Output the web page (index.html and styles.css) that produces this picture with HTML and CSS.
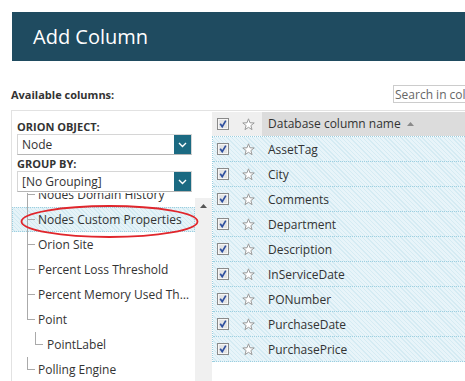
FILE: index.html
```html
<html lang="en">
<head>
<meta charset="UTF-8">
<title>Add Column</title>
<link rel="stylesheet" href="styles.css">
</head>
<body>

<svg class="defs" width="0" height="0">
  <symbol id="check" viewBox="0 0 12 12">
    <rect x="0.5" y="0.5" width="11" height="11" fill="#e4e4e4" stroke="#8a8a8a"/>
    <rect x="1.5" y="1.5" width="9" height="9" fill="none" stroke="#f7f7f7"/>
    <path d="M3.2 5.8 L5.2 8.6 L8.8 2.6" fill="none" stroke="#2f4f9e" stroke-width="1.7"/>
  </symbol>
  <symbol id="star" viewBox="0 0 13 13">
    <polygon points="6.5,0.8 7.97,4.78 12.21,4.95 8.88,7.57 10.03,11.65 6.5,9.3 2.97,11.65 4.12,7.57 0.79,4.95 5.03,4.78" fill="#fff" stroke="#9a9a9a" stroke-width="1"/>
  </symbol>
  <symbol id="caret" viewBox="0 0 9 6">
    <path d="M1 1 L4.5 4.5 L8 1" fill="none" stroke="#fff" stroke-width="1.4"/>
  </symbol>
</svg>

<header class="dialog-title">Add Column</header>

<div class="toolbar">
  <span class="label">Available columns:</span>
  <input type="text" class="search" placeholder="Search in columns">
</div>

<div class="panes">
  <!-- left side: object picker and tree -->
  <div class="side">
    <div class="filters">
      <label>ORION OBJECT:</label>
      <div class="select"><span>Node</span><b class="caret"><svg width="9" height="6"><use href="#caret"/></svg></b></div>
      <label class="second">GROUP BY:</label>
      <div class="select"><span>[No Grouping]</span><b class="caret"><svg width="9" height="6"><use href="#caret"/></svg></b></div>
    </div>
    <div class="tree-wrap">
      <ul class="tree">
        <li class="node">Nodes Domain History</li>
        <li class="node selected">Nodes Custom Properties</li>
        <li class="node">Orion Site</li>
        <li class="node">Percent Loss Threshold</li>
        <li class="node">Percent Memory Used Threshold</li>
        <li class="node last">Point</li>
        <li class="node sub">PointLabel</li>
        <li class="node last">Polling Engine</li>
      </ul>
      <div class="scrollbar">
        <svg width="7" height="4"><path d="M0 4 L3.5 0 L7 4 Z" fill="#555"/></svg>
      </div>
    </div>
    <svg class="callout" width="180" height="34"><ellipse cx="89.5" cy="16.5" rx="88" ry="15.5" fill="none" stroke="#e0262c" stroke-width="1.8"/></svg>
  </div>

  <!-- right side: column list -->
  <div class="grid">
    <div class="grid-head">
      <div class="pick"><svg class="cb" width="12" height="12"><use href="#check"/></svg><svg class="star" width="13" height="13"><use href="#star"/></svg></div>
      <div class="name">Database column name <svg class="sort" width="7" height="4"><path d="M0 4 L3.5 0 L7 4 Z" fill="#8a8a8a"/></svg></div>
    </div>
    <div class="rows">
      <div class="row"><svg class="cb" width="12" height="12"><use href="#check"/></svg><svg class="star" width="13" height="13"><use href="#star"/></svg><span>AssetTag</span></div>
      <div class="row"><svg class="cb" width="12" height="12"><use href="#check"/></svg><svg class="star" width="13" height="13"><use href="#star"/></svg><span>City</span></div>
      <div class="row"><svg class="cb" width="12" height="12"><use href="#check"/></svg><svg class="star" width="13" height="13"><use href="#star"/></svg><span>Comments</span></div>
      <div class="row"><svg class="cb" width="12" height="12"><use href="#check"/></svg><svg class="star" width="13" height="13"><use href="#star"/></svg><span>Department</span></div>
      <div class="row"><svg class="cb" width="12" height="12"><use href="#check"/></svg><svg class="star" width="13" height="13"><use href="#star"/></svg><span>Description</span></div>
      <div class="row"><svg class="cb" width="12" height="12"><use href="#check"/></svg><svg class="star" width="13" height="13"><use href="#star"/></svg><span>InServiceDate</span></div>
      <div class="row"><svg class="cb" width="12" height="12"><use href="#check"/></svg><svg class="star" width="13" height="13"><use href="#star"/></svg><span>PONumber</span></div>
      <div class="row"><svg class="cb" width="12" height="12"><use href="#check"/></svg><svg class="star" width="13" height="13"><use href="#star"/></svg><span>PurchaseDate</span></div>
      <div class="row"><svg class="cb" width="12" height="12"><use href="#check"/></svg><svg class="star" width="13" height="13"><use href="#star"/></svg><span>PurchasePrice</span></div>
    </div>
  </div>
</div>

</body>
</html>
```

FILE: styles.css
```css
html, body {
  margin: 0;
  padding: 0;
  overflow: hidden;
}
body {
  width: 465px;
  height: 381px;
  font-family: 'Open Sans', Arial, sans-serif;
  color: #333;
  background-color: #fff;
}
.defs {
  position: absolute;
}
.dialog-title {
  margin: 12px 0 0 12px;
  height: 49px;
  padding-left: 21px;
  background-color: #1f4b60;
  color: #fff;
  font-size: 20px;
  line-height: 49px;
}
.toolbar {
  display: flex;
  align-items: flex-end;
  height: 42px;
  padding: 0 0 7px 11px;
}
.label {
  flex: 0 0 382px;
  font-size: 11px;
  font-weight: bold;
  line-height: 16px;
}
.search {
  flex: none;
  width: 120px;
  height: 18px;
  box-sizing: border-box;
  border: 1px solid #ccc;
  padding: 0 1px;
  font: 12px 'Open Sans', Arial, sans-serif;
  outline: none;
}
.search::placeholder {
  color: #666;
}
.panes {
  display: flex;
  height: 270px;
  margin-left: 11px;
  border-top: 1px solid #e2e2e2;
}
.side {
  position: relative;
  flex: none;
  width: 200px;
  min-width: 0;
  display: flex;
  flex-direction: column;
  border-left: 1px solid #e2e2e2;
}
.filters {
  position: relative;
  z-index: 1;
  padding: 9px 0 0 5px;
}
.filters label {
  display: block;
  font-size: 11px;
  font-weight: bold;
  line-height: 14px;
}
.filters label.second {
  margin-top: 2px;
}
.select {
  display: flex;
  width: 175px;
  height: 21px;
  box-sizing: border-box;
  border: 1px solid #d6d6d6;
  border-bottom-color: #b5b5b5;
  background-color: #fff;
}
.select span {
  flex: 1;
  padding-left: 4px;
  font-size: 12px;
  line-height: 19px;
}
.caret {
  display: flex;
  align-items: center;
  justify-content: center;
  width: 17px;
  background-color: #1b6a82;
}
.tree-wrap {
  flex: 1;
  display: flex;
  min-height: 0;
  margin-top: 1px;
  overflow: hidden;
}
.tree {
  flex: 1;
  min-width: 0;
  list-style: none;
  margin: -11px 0 0;
  padding: 0;
}
.node {
  height: 25px;
  line-height: 25px;
  padding-left: 26px;
  padding-right: 4px;
  font-size: 12px;
  white-space: nowrap;
  overflow: hidden;
  text-overflow: ellipsis;
  background:
    linear-gradient(#aaa, #aaa) 15px 0 / 1px 25px no-repeat,
    linear-gradient(#aaa, #aaa) 15px 12px / 8px 1px no-repeat;
}
.node.last {
  background:
    linear-gradient(#aaa, #aaa) 15px 0 / 1px 13px no-repeat,
    linear-gradient(#aaa, #aaa) 15px 12px / 8px 1px no-repeat;
}
.node.sub {
  padding-left: 35px;
  background:
    linear-gradient(#aaa, #aaa) 23px 0 / 1px 13px no-repeat,
    linear-gradient(#aaa, #aaa) 23px 12px / 8px 1px no-repeat;
}
.node.selected {
  outline: 1px dotted #9ccfe0;
  outline-offset: -1px;
  background:
    linear-gradient(#aaa, #aaa) 15px 0 / 1px 25px no-repeat,
    linear-gradient(#aaa, #aaa) 15px 12px / 8px 1px no-repeat,
    repeating-linear-gradient(45deg, #e6f3f8 0 2px, #d2eaf2 2px 3px);
}
.scrollbar {
  flex: 0 0 17px;
  margin-top: 5px;
  background-color: #f0f0f0;
}
.scrollbar svg {
  display: block;
  margin: 6px auto 0;
}
/* red mark round the custom properties entry */
.callout {
  position: absolute;
  left: 8px;
  top: 94px;
}
.grid {
  flex: 1;
  min-width: 0;
  padding-top: 1px;
}
.grid-head {
  display: flex;
  height: 24px;
}
.grid-head .pick {
  display: flex;
  align-items: center;
  width: 45px;
  padding-left: 5px;
  background-color: #efefef;
}
.grid-head .name {
  flex: 1;
  padding-left: 6px;
  background-color: #dcdcdc;
  font-size: 12px;
  line-height: 24px;
  white-space: nowrap;
}
.sort {
  margin-left: 3px;
  vertical-align: 2px;
}
.rows {
  border-left: 1px dotted #9ccfe0;
  border-top: 1px dotted #9ccfe0;
}
.row {
  display: flex;
  align-items: center;
  height: 25px;
  box-sizing: border-box;
  padding-left: 4px;
  border-bottom: 1px dotted #9ccfe0;
  background: repeating-linear-gradient(45deg, #e8f4f9 0 2px, #d5ebf3 2px 3px);
  font-size: 12px;
  white-space: nowrap;
}
.cb {
  flex: none;
}
.star {
  flex: none;
  margin-left: 13px;
}
.row span {
  margin-left: 13px;
}
```
